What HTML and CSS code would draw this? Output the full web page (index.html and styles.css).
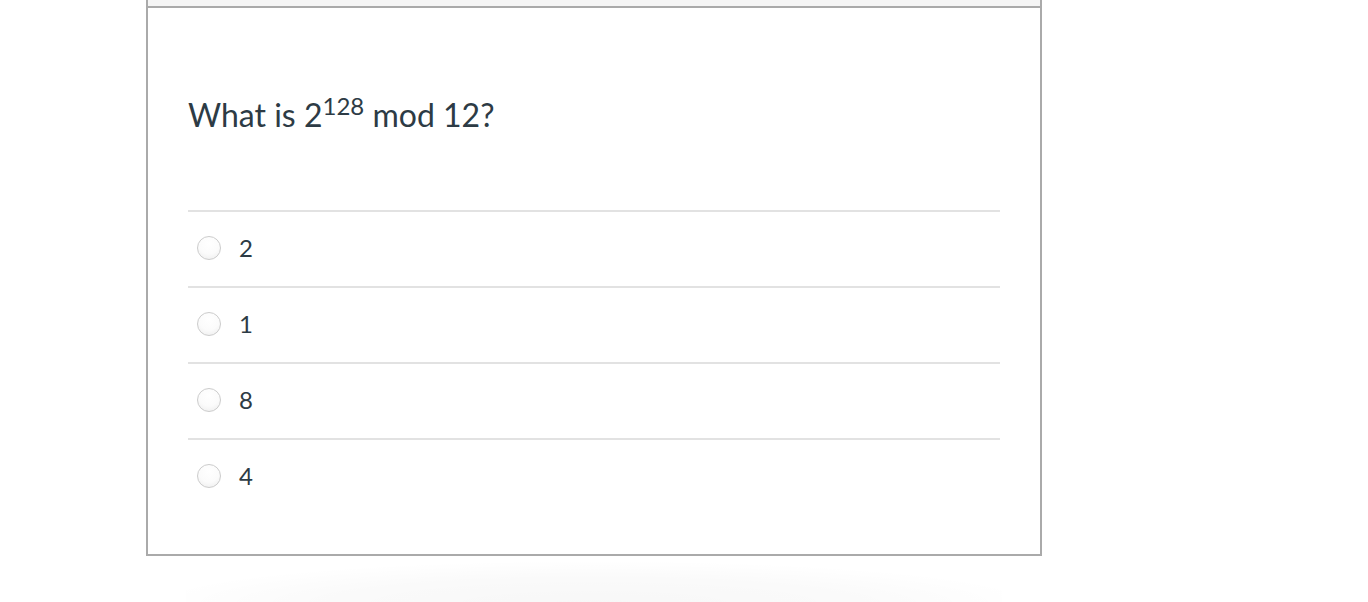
FILE: index.html
```html
<!DOCTYPE html>
<html>
<head>
<meta charset="utf-8">
<link rel="stylesheet" href="styles.css">
</head>
<body>
<div class="page">
  <div class="card">
    <div class="card-header"></div>
    <div class="card-body">
      <p class="question">What is 2<sup>128</sup> mod 12?</p>
      <div class="answers">
        <label class="answer"><span class="radio"></span><span class="answer-text">2</span></label>
        <label class="answer"><span class="radio"></span><span class="answer-text">1</span></label>
        <label class="answer"><span class="radio"></span><span class="answer-text">8</span></label>
        <label class="answer"><span class="radio"></span><span class="answer-text">4</span></label>
      </div>
    </div>
  </div>
  <div class="shadow"></div>
</div>
</body>
</html>
```
FILE: styles.css
```css
html, body {
  margin: 0;
  padding: 0;
  background: #fff;
  height: 100%;
  overflow: hidden;
}
body {
  font-family: Lato, "Helvetica Neue", Arial, sans-serif;
  color: #2d3b45;
}
.page {
  padding-left: 146px;
  width: 896px;
}
.card {
  border: 2px solid #aaaaaa;
  border-top: none;
  background: #fff;
}
.card-header {
  height: 6px;
  background: #f5f5f5;
  border-bottom: 2px solid #aaaaaa;
}
.card-body {
  padding: 0 40px 40px 40px;
}
.question {
  margin: 0 0 71px 0;
  padding-top: 83px;
  font-size: 32px;
  line-height: 48px;
}
.question sup {
  font-size: 24px;
  line-height: 0;
  vertical-align: 0;
  position: relative;
  top: -12px;
}
.answers {
  display: flex;
  flex-direction: column;
}
.answer {
  display: flex;
  align-items: center;
  height: 71px;
  padding-bottom: 3px;
  border-top: 2px solid #e2e2e2;
  padding-left: 9px;
  gap: 18px;
}
.radio {
  width: 22px;
  height: 22px;
  border-radius: 50%;
  border: 1px solid #cccccc;
  background: radial-gradient(circle at 50% 30%, #ffffff 0%, #fbfbfb 55%, #ebebeb 100%);
  box-sizing: content-box;
  flex: none;
}
.answer-text {
  font-size: 24px;
  line-height: 28px;
  color: #2d3b45;
}
.shadow {
  height: 44px;
  margin: 4px 40px 0 40px;
  background: radial-gradient(ellipse 55% 100% at 50% 100%, rgba(0,0,0,0.03) 0%, rgba(0,0,0,0.018) 60%, rgba(0,0,0,0) 100%);
}
```
